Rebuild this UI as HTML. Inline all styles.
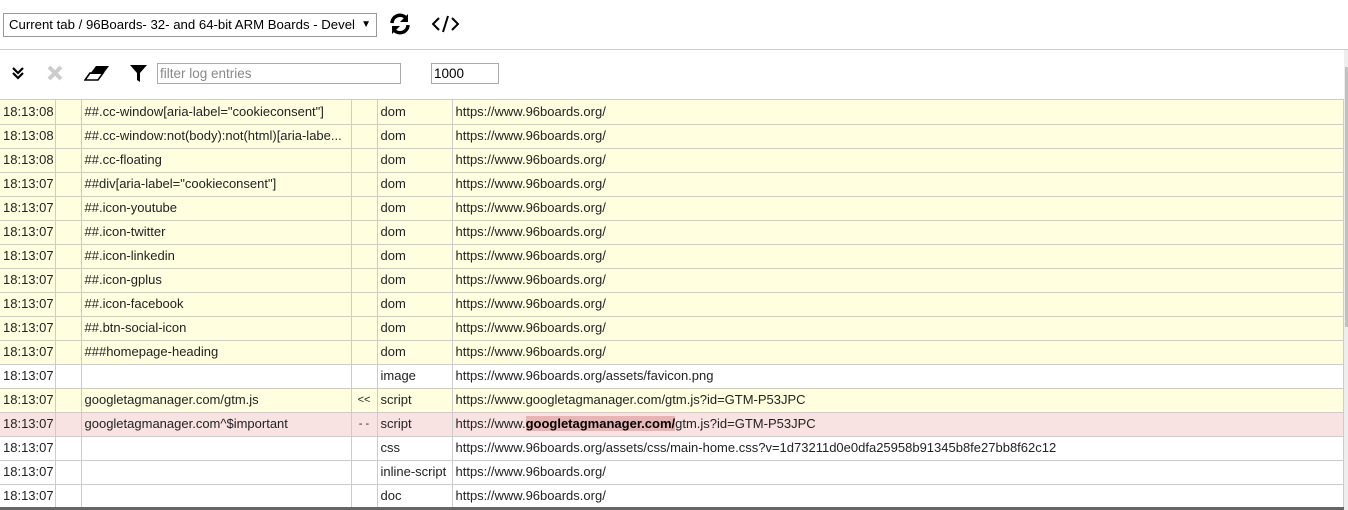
<!DOCTYPE html>
<html><head><meta charset="utf-8"><style>
*{box-sizing:border-box;margin:0;padding:0}
body{width:1348px;height:510px;overflow:hidden;background:#fff;font-family:"Liberation Sans",Arial,sans-serif;font-size:13px;color:#222;position:relative}
#top{position:absolute;left:0;top:0;width:1348px;height:50px;border-bottom:1px solid #ccc}
#sel{position:absolute;left:3px;top:13px;width:374px;height:24px;border:1px solid #999;font-size:13.2px;line-height:22px;padding-left:5px;color:#000;white-space:nowrap;overflow:hidden}
#sel b{position:absolute;right:5px;top:0;font-weight:normal;font-size:10px;background:#fff;padding-left:3px}
#filter{position:absolute;left:157px;top:63px;width:244px;height:21px;border:1px solid #aaa;color:#888;font-size:13.5px;padding-left:2px;line-height:19px}
#max{position:absolute;left:431px;top:63px;width:68px;height:21px;border:1px solid #aaa;color:#000;font-size:13.5px;padding-left:2px;line-height:19px}
#tl{position:absolute;left:0;top:99px;width:1344px;height:1px;background:#ccc}
table{position:absolute;left:0;top:100px;border-collapse:collapse;width:1344px;table-layout:fixed}
td{height:24px;border:1px solid #ccc;border-left:none;border-top:none;font-size:13px;padding:0 0 0 3px;white-space:nowrap;overflow:hidden;line-height:22px}
td:nth-child(2),td:nth-child(4){border-left:1px solid #ccc}
tr{height:24px}
tr.y td{background:#ffffe0}
tr.r td{background:#f9e2e2}
.h{background:#e8b4b4;font-weight:bold;color:#000}
#bot{position:absolute;left:0;top:507px;width:1344px;height:3px;background:#666}
#sb{position:absolute;left:1344px;top:50px;width:4px;height:460px;background:#eee}
#th{position:absolute;left:1345px;top:67px;width:3px;height:260px;background:#c1c1c1}
</style></head><body>
<div id="top">
<div id="sel">Current tab / 96Boards- 32- and 64-bit ARM Boards - Devel<b>▼</b></div>
<svg style="position:absolute;left:389px;top:12px" width="22" height="24" viewBox="0 0 22 24"><path d="M3 11 A8 8 0 0 1 17 6" fill="none" stroke="#000" stroke-width="3.5"/><path d="M19 2 L19 10 L11 10 Z" fill="#000"/><path d="M19 13 A8 8 0 0 1 5 18" fill="none" stroke="#000" stroke-width="3.5"/><path d="M3 22 L3 14 L11 14 Z" fill="#000"/></svg>
<svg style="position:absolute;left:432px;top:14px" width="27" height="20" viewBox="0 0 27 20"><path d="M7 4 L1 10 L7 16 M20 4 L26 10 L20 16 M16 2 L11 18" fill="none" stroke="#000" stroke-width="2"/></svg>
</div>
<svg style="position:absolute;left:11px;top:66px" width="14" height="14" viewBox="0 0 14 14"><path d="M2 2 L7 7 L12 2 M2 7 L7 12 L12 7" fill="none" stroke="#000" stroke-width="2.2"/></svg>
<svg style="position:absolute;left:47px;top:65px" width="16" height="16" viewBox="0 0 16 16"><path d="M2 2 L14 14 M14 2 L2 14" stroke="#ccc" stroke-width="4"/></svg>
<svg style="position:absolute;left:84px;top:64px" width="26" height="18" viewBox="0 0 26 18"><path d="M6 9 L1 16 L14 16 L19 9 Z" fill="none" stroke="#000" stroke-width="1.6"/><path d="M12 2 L25 2 L19 10 L6 10 Z" fill="#000"/></svg>
<svg style="position:absolute;left:129px;top:64px" width="19" height="19" viewBox="0 0 19 19"><path d="M1 1 L18 1 L11 9 L11 18 L8 16 L8 9 Z" fill="#000"/></svg>
<div id="filter">filter log entries</div>
<div id="max">1000</div>
<div id="tl"></div>
<table>
<colgroup><col style="width:55px"><col style="width:26px"><col style="width:270px"><col style="width:26px"><col style="width:75px"><col></colgroup>
<tr class="y"><td>18:13:08</td><td></td><td>##.cc-window[aria-label="cookieconsent"]</td><td></td><td>dom</td><td>https://www.96boards.org/</td></tr>
<tr class="y"><td>18:13:08</td><td></td><td>##.cc-window:not(body):not(html)[aria-labe...</td><td></td><td>dom</td><td>https://www.96boards.org/</td></tr>
<tr class="y"><td>18:13:08</td><td></td><td>##.cc-floating</td><td></td><td>dom</td><td>https://www.96boards.org/</td></tr>
<tr class="y"><td>18:13:07</td><td></td><td>##div[aria-label="cookieconsent"]</td><td></td><td>dom</td><td>https://www.96boards.org/</td></tr>
<tr class="y"><td>18:13:07</td><td></td><td>##.icon-youtube</td><td></td><td>dom</td><td>https://www.96boards.org/</td></tr>
<tr class="y"><td>18:13:07</td><td></td><td>##.icon-twitter</td><td></td><td>dom</td><td>https://www.96boards.org/</td></tr>
<tr class="y"><td>18:13:07</td><td></td><td>##.icon-linkedin</td><td></td><td>dom</td><td>https://www.96boards.org/</td></tr>
<tr class="y"><td>18:13:07</td><td></td><td>##.icon-gplus</td><td></td><td>dom</td><td>https://www.96boards.org/</td></tr>
<tr class="y"><td>18:13:07</td><td></td><td>##.icon-facebook</td><td></td><td>dom</td><td>https://www.96boards.org/</td></tr>
<tr class="y"><td>18:13:07</td><td></td><td>##.btn-social-icon</td><td></td><td>dom</td><td>https://www.96boards.org/</td></tr>
<tr class="y"><td>18:13:07</td><td></td><td>###homepage-heading</td><td></td><td>dom</td><td>https://www.96boards.org/</td></tr>
<tr><td>18:13:07</td><td></td><td></td><td></td><td>image</td><td>https://www.96boards.org/assets/favicon.png</td></tr>
<tr class="y"><td>18:13:07</td><td></td><td>googletagmanager.com/gtm.js</td><td style="text-align:center;padding:0;font-size:11px">&lt;&lt;</td><td>script</td><td>https://www.googletagmanager.com/gtm.js?id=GTM-P53JPC</td></tr>
<tr class="r"><td>18:13:07</td><td></td><td>googletagmanager.com^$important</td><td style="text-align:center;padding:0;font-size:11px">- -</td><td>script</td><td>https://www.<span class="h">googletagmanager.com/</span>gtm.js?id=GTM-P53JPC</td></tr>
<tr><td>18:13:07</td><td></td><td></td><td></td><td>css</td><td>https://www.96boards.org/assets/css/main-home.css?v=1d73211d0e0dfa25958b91345b8fe27bb8f62c12</td></tr>
<tr><td>18:13:07</td><td></td><td></td><td></td><td>inline-script</td><td>https://www.96boards.org/</td></tr>
<tr><td>18:13:07</td><td></td><td></td><td></td><td>doc</td><td>https://www.96boards.org/</td></tr>
</table>
<div id="bot"></div>
<div id="sb"></div><div id="th"></div>
</body></html>
